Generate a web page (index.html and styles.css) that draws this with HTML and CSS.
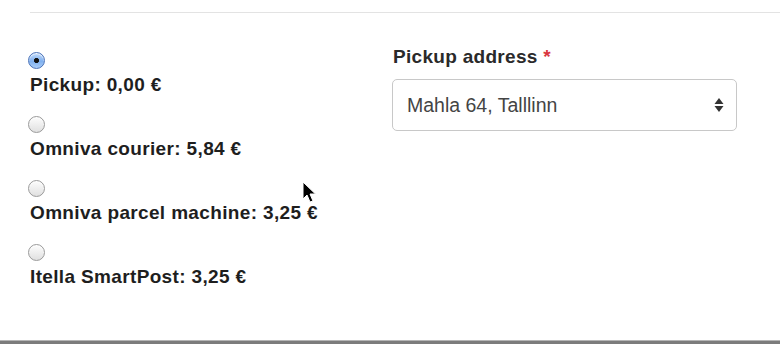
FILE: index.html
```html
<!DOCTYPE html>
<html lang="en">
<head>
    <meta charset="UTF-8">
    <title>Delivery</title>
    <link rel="stylesheet" href="styles.css">
</head>
<body>

    <div class="section">
        <div class="section-rule"></div>

        <div class="delivery">
            <!-- Shipping methods -->
            <div class="methods">
                <div class="method">
                    <input type="radio" name="shipping" id="m-pickup" checked>
                    <label for="m-pickup">Pickup: 0,00 €</label>
                </div>
                <div class="method">
                    <input type="radio" name="shipping" id="m-courier">
                    <label for="m-courier">Omniva courier: 5,84 €</label>
                </div>
                <div class="method">
                    <input type="radio" name="shipping" id="m-parcel">
                    <label for="m-parcel">Omniva parcel machine: 3,25 €</label>
                </div>
                <div class="method">
                    <input type="radio" name="shipping" id="m-smartpost">
                    <label for="m-smartpost">Itella SmartPost: 3,25 €</label>
                </div>
            </div>

            <!-- Pickup address -->
            <div class="address">
                <label class="field-label" for="pickup-address">Pickup address <span class="required">*</span></label>
                <div class="select">
                    <span class="select-value">Mahla 64, Talllinn</span>
                    <svg class="select-arrows" width="10" height="16" viewBox="0 0 10 16">
                        <path d="M5 1 L9.5 7 L0.5 7 Z" fill="#333"/>
                        <path d="M5 15 L9.5 9 L0.5 9 Z" fill="#333"/>
                    </svg>
                </div>
            </div>
        </div>

        <!-- mouse pointer -->
        <svg class="pointer" width="16" height="24" viewBox="0 0 16 24">
            <path d="M1 1 L1 18 L5 14 L8 21 L11 20 L8 13 L13.5 13 Z" fill="#000" stroke="#fff" stroke-width="1"/>
        </svg>
    </div>

    <div class="footer-bar"></div>

</body>
</html>
```

FILE: styles.css
```css
/* Page */
body {
    margin: 0;
    font-family: "Liberation Sans", Arial, Helvetica, sans-serif;
    color: #222;
    background-color: #fff;
    width: 780px;
    height: 344px;
    overflow: hidden;
    display: flex;
    flex-direction: column;
}

.section {
    position: relative;
    flex: 1;
    padding-left: 30px;
    padding-top: 12px;
}

.section-rule {
    height: 1px;
    background-color: #e3e3e3;
}

/* Two columns */
.delivery {
    display: grid;
    grid-template-columns: 364px 345px;
    margin-left: -2px;
    padding-top: 33px;
}

/* Shipping method list */
.methods {
    padding-top: 6px;
}

.method {
    margin-bottom: 20px;
}

.method input[type="radio"] {
    -webkit-appearance: none;
    appearance: none;
    display: block;
    width: 17px;
    height: 17px;
    margin: 0 0 5px 0;
    border-radius: 50%;
    border: 1px solid #9a9a9a;
    background: linear-gradient(#fdfdfd, #e0e0e0);
    box-shadow: inset 0 1px 1px rgba(255, 255, 255, 0.9);
    box-sizing: border-box;
}

.method input[type="radio"]:checked {
    border-color: #4a72b8;
    background: radial-gradient(circle, #111 0, #111 2.2px, transparent 2.9px),
                linear-gradient(#c4dcfb, #7fb0ef 55%, #a9cdf8);
}

.method label {
    display: block;
    margin-left: 2px;
    font-weight: bold;
    font-size: 19px;
    line-height: 22px;
    letter-spacing: 0.35px;
    color: #1e1e1e;
}

/* Pickup address field */
.field-label {
    display: block;
    font-weight: bold;
    font-size: 19px;
    line-height: 22px;
    letter-spacing: 0.3px;
    color: #2a2a2a;
    margin-left: 1px;
    margin-bottom: 11px;
}

.required {
    color: #d9363e;
}

.select {
    height: 52px;
    box-sizing: border-box;
    border: 1px solid #c8c8c8;
    border-radius: 5px;
    display: flex;
    align-items: center;
    justify-content: space-between;
    padding: 0 12px 0 14px;
}

.select-value {
    font-size: 19.5px;
    color: #444;
}

/* Cursor overlay */
.pointer {
    position: absolute;
    left: 302px;
    top: 181px;
}

.footer-bar {
    height: 3px;
    background-color: #7c7c7c;
    border-top: 1px solid #b5b5b5;
}
```
